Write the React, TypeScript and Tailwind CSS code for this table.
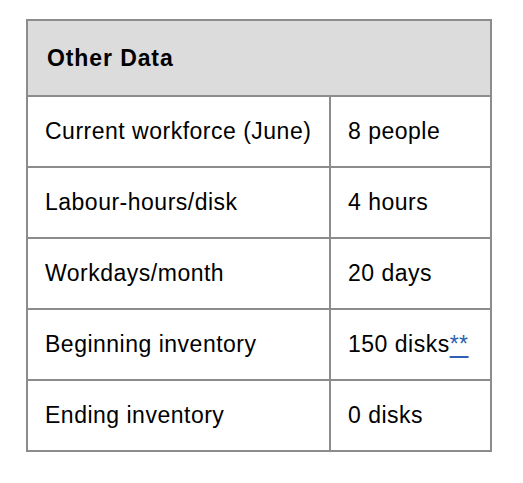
const rows: [string, React.ReactNode][] = [
  ["Current workforce (June)", "8 people"],
  ["Labour-hours/disk", "4 hours"],
  ["Workdays/month", "20 days"],
  [
    "Beginning inventory",
    <>
      150 disks
      <a href="#" className="text-[#2f5fb3] underline decoration-[#2f5fb3] underline-offset-4">
        **
      </a>
    </>,
  ],
  ["Ending inventory", "0 disks"],
];

export default function App() {
  return (
    <div
      className="min-h-[483px] w-[523px] bg-white pl-[26px] pt-[19px] text-black"
      style={{ fontFamily: '"Liberation Sans", Arial, sans-serif' }}
    >
      <table className="w-[466px] border-collapse border-2 border-[#8c8c8c] text-[23px] tracking-[0.5px]">
        <thead>
          <tr className="h-[76px] bg-[#dcdcdc]">
            <th
              colSpan={2}
              className="border-2 border-[#8c8c8c] pl-[19px] text-left font-bold tracking-[0.9px]"
            >
              Other Data
            </th>
          </tr>
        </thead>
        <tbody>
          {rows.map(([label, value]) => (
            <tr key={label} className="h-[71px]">
              <td className="w-[303px] border-2 border-[#8c8c8c] pl-[17px]">{label}</td>
              <td className="border-2 border-[#8c8c8c] pl-[17px]">{value}</td>
            </tr>
          ))}
        </tbody>
      </table>
    </div>
  );
}
